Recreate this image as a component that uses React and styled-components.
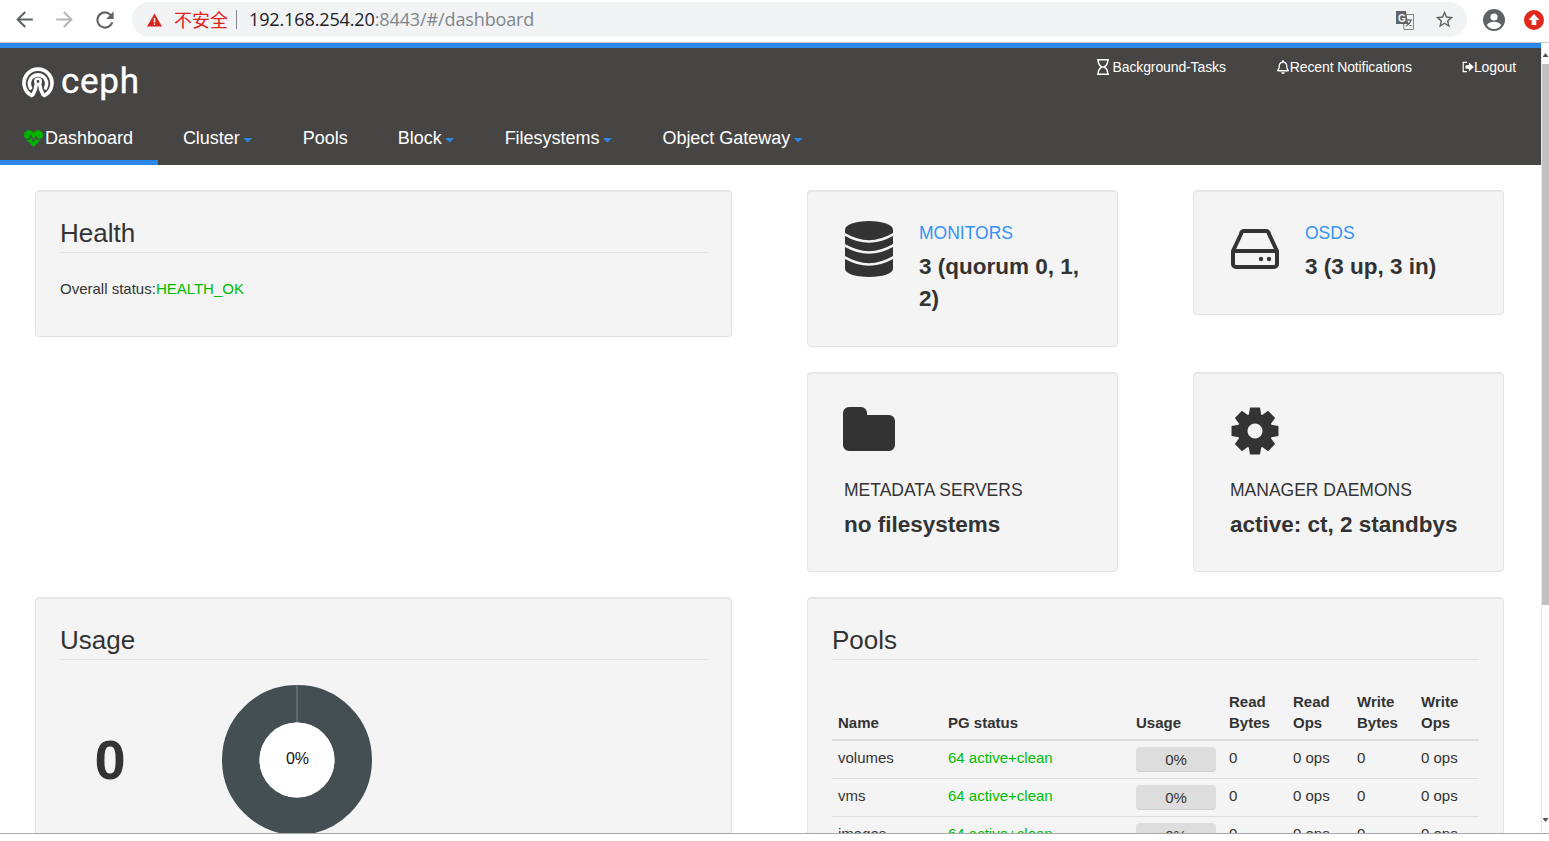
import React from "react";
import styled, { createGlobalStyle } from "styled-components";
import { FaHeartbeat, FaRegBell, FaRegHourglass } from "react-icons/fa";

const Global = createGlobalStyle`
  html, body { margin: 0; padding: 0; height: 100%; overflow: hidden; background: #fff; }
  #root { height: 100%; }
  * { box-sizing: border-box; }
`;

const Shell = styled.div`
  height: 841px;
  display: flex;
  flex-direction: column;
  font-family: "Liberation Sans", Arial, sans-serif;
  color: #333;
  overflow: hidden;
`;
const Toolbar = styled.div`
  flex: 0 0 43px;
  display: flex;
  padding: 2px 0 5px 4px;
  border-bottom: 1px solid #ccc;
  background: #fff;
  overflow: hidden;
`;
const ToolButton = styled.div`
  flex: 0 0 40px;
  height: 35px;
  display: flex;
  align-items: center;
  justify-content: center;
  margin-left: ${(p) => p.$left || 0}px;
  color: #5f6368;
`;
const Omnibox = styled.div`
  flex: 0 0 1335px;
  height: 35px;
  margin: 0 7px;
  padding: 0 3px 0 15px;
  display: flex;
  align-items: center;
  background: #f1f3f4;
  border-radius: 18px;
`;
const Insecure = styled.span`
  margin: 0 0 2px 12px;
  font: 18px "Noto Sans CJK SC", sans-serif;
  color: #e0211b;
`;
const Divider = styled.span`
  width: 1px;
  height: 19px;
  margin: 0 12px 0 8px;
  background: #80868b;
`;
const Url = styled.span`
  flex: 1;
  margin-bottom: 2px;
  font: 18px "Open Sans", sans-serif;
  letter-spacing: -0.12px;
  color: #80868b;
  white-space: nowrap;
`;
const UrlHost = styled.span`
  color: #202124;
`;
const OmniIcon = styled.div`
  flex: 0 0 40px;
  display: flex;
  justify-content: center;
`;

const Viewport = styled.div`
  flex: 1;
  min-height: 0;
  display: flex;
`;
const Page = styled.div`
  flex: 1;
  min-width: 0;
  overflow: hidden;
`;
const Scrollbar = styled.div`
  flex: 0 0 8px;
  display: flex;
  flex-direction: column;
  align-items: center;
  background: #fff;
  border-left: 1px solid #e8e8e8;
`;
const ScrollArrow = styled.div`
  flex: 0 0 4px;
  width: 6px;
  margin: ${(p) => (p.$down ? "auto 0 11px" : "10px 0 7px")};
  background: #505050;
  clip-path: ${(p) =>
    p.$down
      ? "polygon(0 0, 100% 0, 50% 100%)"
      : "polygon(50% 0, 100% 100%, 0 100%)"};
`;
const ScrollThumb = styled.div`
  flex: 0 0 541px;
  width: 100%;
  background: #c1c1c1;
`;
const BottomEdge = styled.div`
  flex: 0 0 8px;
  border-top: 1px solid #a9a9a9;
  background: #fff;
`;

const Header = styled.header`
  height: 122px;
  background: #474544;
  border-top: 5px solid #2b88e8;
  display: flex;
  flex-direction: column;
`;
const TopRow = styled.div`
  height: 67px;
  display: flex;
  justify-content: space-between;
  padding: 0 25px 0 22px;
`;
const Brand = styled.div`
  display: flex;
  align-items: center;
  gap: 7px;
  height: 67px;
  color: #fff;
`;
const BrandName = styled.span`
  font: 400 35px "Roboto", sans-serif;
  -webkit-text-stroke: 0.4px #fff;
  letter-spacing: 0.7px;
  line-height: 1;
`;
const TopLinks = styled.div`
  display: flex;
  gap: 50px;
  height: 38px;
  align-items: center;
`;
const TopLink = styled.a`
  display: flex;
  align-items: center;
  gap: ${(p) => p.$gap || 0}px;
  font-size: 14px;
  letter-spacing: -0.12px;
  color: #fff;
`;
const Nav = styled.nav`
  height: 50px;
  display: flex;
`;
const NavItem = styled.a`
  height: 50px;
  padding: 2px 25px 0 ${(p) => (p.$active ? 24 : 25)}px;
  display: flex;
  align-items: center;
  font-size: 18px;
  letter-spacing: -0.02px;
  color: #fff;
  border-bottom: 5px solid ${(p) => (p.$active ? "#2b88e8" : "transparent")};
`;
const NavIcon = styled.span`
  display: flex;
  margin-right: 2px;
  color: #00b300;
`;
const Caret = styled.span`
  width: 10px;
  height: 5px;
  margin: 3px 0 0 3px;
  background: #2b88e8;
  clip-path: polygon(0 0, 100% 0, 50% 100%);
`;

const Content = styled.main`
  display: grid;
  grid-template-columns: 697px 697px;
  column-gap: 75px;
  row-gap: 25px;
  padding: 25px 37px 0 35px;
  align-items: start;
`;
const Panel = styled.section`
  background: #f4f4f4;
  border: 1px solid #e3e3e3;
  border-radius: 4px;
  box-shadow: inset 0 1px 1px rgba(0, 0, 0, 0.05);
  padding: 24px;
  min-height: ${(p) => p.$minHeight || 0}px;
`;
const PanelTitle = styled.h2`
  margin: 0;
  height: 38px;
  font-size: 26px;
  font-weight: 400;
  line-height: 36px;
  border-bottom: 1px solid #e2e2e2;
  color: #333;
`;
const StatusLine = styled.p`
  margin: 26px 0 0;
  font-size: 15px;
  line-height: 20px;
`;
const Good = styled.span`
  color: #00bb00;
`;
const InfoGrid = styled.div`
  display: grid;
  grid-template-columns: 311px 311px;
  column-gap: 75px;
  row-gap: 25px;
  align-items: start;
`;
const InfoCard = styled(Panel)`
  display: ${(p) => (p.$stacked ? "block" : "grid")};
  grid-template-columns: 75px 1fr;
  padding: 30px 24px 30px 36px;
  min-height: ${(p) => p.$h}px;
`;
const IconWrap = styled.div`
  height: 56px;
  color: #333;
  display: flex;
  align-items: center;
  margin-left: ${(p) => p.$left || 0}px;
`;
const StackedIcon = styled.div`
  height: 75px;
  padding-top: 4px;
  margin-left: ${(p) => p.$left || 0}px;
  display: flex;
  align-items: flex-start;
`;
const InfoLabel = styled.div`
  font-size: 17.5px;
  line-height: 24px;
  color: ${(p) => (p.$link ? "#3393f5" : "#333")};
`;
const InfoValue = styled.div`
  margin-top: ${(p) => (p.$stacked ? 7 : 6)}px;
  font-size: 22.5px;
  font-weight: 700;
  line-height: 32px;
  color: #333;
`;
const UsageBody = styled.div`
  display: grid;
  grid-template-columns: 100px 150px;
  column-gap: 62px;
  align-items: center;
  margin-top: 25px;
  height: 260px;
  align-content: start;
`;
const BigNumber = styled.div`
  font-size: 56px;
  font-weight: 700;
  line-height: 150px;
  height: 150px;
  text-align: center;
  color: #333;
`;
const Donut = styled.div`
  position: relative;
  width: 150px;
  height: 150px;
`;
const DonutLabel = styled.div`
  position: absolute;
  inset: 0;
  display: flex;
  align-items: center;
  justify-content: center;
  font-size: 16px;
  color: #111;
  padding: 0 0 2px 1px;
`;
const Table = styled.table`
  width: 647px;
  margin-top: 25px;
  border-collapse: collapse;
  table-layout: fixed;
  font-size: 15px;
`;
const Th = styled.th`
  width: ${(p) => p.$w}px;
  padding: 6px;
  text-align: left;
  vertical-align: bottom;
  font-weight: 700;
  line-height: 21px;
  border-bottom: 2px solid #ddd;
`;
const Td = styled.td`
  height: 38px;
  padding: 0 6px 3px;
  line-height: 21px;
  border-bottom: 1px solid #ddd;
  color: ${(p) => (p.$good ? "#00bb00" : "#333")};
  vertical-align: middle;
`;
const Bar = styled.div`
  width: 80px;
  height: 25px;
  margin-top: 3px;
  background: #ddd;
  border-radius: 4px;
  box-shadow: inset 0 -1px 0 rgba(0, 0, 0, 0.06);
  text-align: center;
  line-height: 26px;
  color: #333;
`;

const Back = () => (
  <svg width="25" height="25" viewBox="0 0 24 24"><path fill="currentColor" d="M20 11H7.830l5.590-5.590L12 4l-8 8 8 8 1.410-1.410L7.830 13H20z" /></svg>
);
const Forward = () => (
  <svg width="25" height="25" viewBox="0 0 24 24"><path fill="#b4b7ba" d="M4 11h12.170l-5.590-5.590L12 4l8 8-8 8-1.410-1.410L16.170 13H4z" /></svg>
);
const Reload = () => (
  <svg width="26" height="26" viewBox="0 0 24 24"><path fill="currentColor" d="M17.650 6.350A7.960 7.960 0 0 0 12 4a8 8 0 1 0 7.730 10h-2.080A6 6 0 1 1 12 6c1.660 0 3.140.690 4.220 1.780L13 11h7V4z" /></svg>
);
const Warning = () => (
  <svg width="15" height="14" viewBox="0 0 15 14"><path fill="#d9251d" d="M7.500.5 15 13.600H0z" /><path fill="#fff" d="M6.800 5h1.400v4.600H6.800zM6.800 10.400h1.400v1.500H6.800z" /></svg>
);
const Translate = () => (
  <svg width="19" height="20" viewBox="0 0 19 20">
    <path fill="none" stroke="#80868b" d="M8 4.500h10.500v15H9z" />
    <path fill="#5f6368" d="M1 1h10l2 13H1z" />
    <text x="3" y="11.500" fontSize="10" fontWeight="700" fontFamily="Liberation Sans" fill="#f1f3f4">G</text>
    <path fill="none" stroke="#5f6368" strokeWidth="1.200" d="M11 10h6M14 9v1.500M16 10.500c-1 3-3 4.500-5 5.500M12 12c1 1.600 2.500 3 4.500 4" />
  </svg>
);
const Star = () => (
  <svg width="21" height="21" viewBox="0 0 24 24"><path fill="#5f6368" d="M22 9.240l-7.190-.620L12 2 9.190 8.630 2 9.240l5.460 4.730L5.820 21 12 17.270 18.180 21l-1.630-7.030zM12 15.400l-3.760 2.270 1-4.280-3.320-2.880 4.380-.380L12 6.100l1.710 4.040 4.380.380-3.320 2.880 1 4.280z" /></svg>
);
const Avatar = () => (
  <svg width="22" height="22" viewBox="0 0 22 22">
    <circle cx="11" cy="11" r="11" fill="#5f6368" />
    <circle cx="11" cy="8" r="3.600" fill="#fff" />
    <path fill="#fff" d="M3.800 16c1.500-2.400 4.500-3.300 7.200-3.300s5.700.9 7.200 3.300A9 9 0 0 1 11 20a9 9 0 0 1-7.200-4z" />
  </svg>
);
const UpdateBadge = () => (
  <svg width="20" height="20" viewBox="0 0 20 20">
    <circle cx="10" cy="10" r="10" fill="#e0281c" />
    <path fill="#fff" d="M10 4l5.500 6H12.300v5H7.700v-5H4.500z" />
  </svg>
);
const CephMark = () => (
  <svg width="32" height="32" viewBox="0 0 32 32" fill="none" stroke="#fff" strokeWidth="3.600" strokeLinecap="round">
    <path d="M9.500 29.500A14 14 0 1 1 22.500 29.500" />
    <path d="M8.500 22A8.700 8.700 0 1 1 23.500 22" />
    <circle cx="16" cy="15.500" r="2.700" strokeWidth="2.600" />
    <path d="M14 19.500c0 3.500-1.500 6.500-3 9M18 19.500c0 3.500 1.500 6.500 3 9" />
  </svg>
);
const LogoutIcon = () => (
  <svg width="12" height="12" viewBox="0 0 13 12">
    <path fill="none" stroke="#fff" strokeWidth="1.300" d="M5.500 1H1.300v10h4.200" />
    <path fill="#fff" d="M3.800 4h3.700V1.200L12.800 6l-5.300 4.800V8H3.800z" />
  </svg>
);
const DatabaseIcon = () => (
  <svg width="48" height="56" viewBox="0 0 48 56">
    <path fill="#333" d="M0 8.500C0 3.800 10.700 0 24 0s24 3.800 24 8.500V48c0 4.400-10.700 8-24 8S0 52.400 0 48z" />
    <path fill="none" stroke="#f4f4f4" strokeWidth="2.600" d="M-1 13Q24 28 49 13M-1 24Q24 39 49 24M-1 36Q24 51 49 36" />
  </svg>
);
const HddIcon = () => (
  <svg width="48" height="40" viewBox="0 0 48 40" fill="none" stroke="#333" strokeWidth="4" strokeLinejoin="round">
    <path d="M2 22 10 5a3 3 0 0 1 3-3h22a3 3 0 0 1 3 3l8 17v13a3 3 0 0 1-3 3H5a3 3 0 0 1-3-3z" />
    <path d="M2 22h44" />
    <circle cx="30" cy="30" r="2.200" fill="#333" stroke="none" />
    <circle cx="38" cy="30" r="2.200" fill="#333" stroke="none" />
  </svg>
);
const FolderIcon = () => (
  <svg width="52" height="44" viewBox="0 0 52 44">
    <path fill="#333" d="M6 0h12a6 6 0 0 1 6 6v2h22a6 6 0 0 1 6 6v24a6 6 0 0 1-6 6H6a6 6 0 0 1-6-6V6a6 6 0 0 1 6-6z" />
  </svg>
);
const gearPath = (() => {
  const pts = [];
  const teeth = 8;
  for (let i = 0; i < teeth; i++) {
    const a = (i * Math.PI * 2) / teeth - Math.PI / 2;
    [[17.5, -0.36], [24, -0.21], [24, 0.21], [17.5, 0.36]].forEach(([r, d]) => {
      pts.push(`${(24 + r * Math.cos(a + d)).toFixed(2)} ${(24 + r * Math.sin(a + d)).toFixed(2)}`);
    });
  }
  return `M${pts.join("L")}Z M24 16.500a7.500 7.500 0 1 0 .01 0Z`;
})();
const GearIcon = () => (
  <svg width="48" height="48" viewBox="0 0 48 48"><path fill="#333" fillRule="evenodd" d={gearPath} /></svg>
);
const UsageDonut = () => (
  <svg width="150" height="150" viewBox="0 0 150 150">
    <circle cx="75" cy="75" r="56.250" fill="none" stroke="#434f52" strokeWidth="37.500" />
    <path d="M75 0v37.500" stroke="#7f9a8c" strokeWidth="0.800" />
    <circle cx="75" cy="75" r="37.500" fill="#fff" />
  </svg>
);

const pools = ["volumes", "vms", "images", "backups"];
const headers = [
  ["Name", 110], ["PG status", 188], ["Usage", 93], ["Read Bytes", 64],
  ["Read Ops", 64], ["Write Bytes", 64], ["Write Ops", 64],
];

export default function App() {
  return (
    <Shell>
      <Global />
      <Toolbar>
        <ToolButton><Back /></ToolButton>
        <ToolButton><Forward /></ToolButton>
        <ToolButton $left={1}><Reload /></ToolButton>
        <Omnibox>
          <Warning />
          <Insecure>不安全</Insecure>
          <Divider />
          <Url><UrlHost>192.168.254.20</UrlHost>:8443/#/dashboard</Url>
          <OmniIcon><Translate /></OmniIcon>
          <OmniIcon><Star /></OmniIcon>
        </Omnibox>
        <ToolButton><Avatar /></ToolButton>
        <ToolButton><UpdateBadge /></ToolButton>
      </Toolbar>
      <Viewport>
        <Page>
          <Header>
            <TopRow>
              <Brand>
                <CephMark />
                <BrandName>ceph</BrandName>
              </Brand>
              <TopLinks>
                <TopLink $gap={2}><FaRegHourglass size={16} />Background-Tasks</TopLink>
                <TopLink><FaRegBell size={14} />Recent Notifications</TopLink>
                <TopLink><LogoutIcon />Logout</TopLink>
              </TopLinks>
            </TopRow>
            <Nav>
              <NavItem $active><NavIcon><FaHeartbeat size={19} /></NavIcon>Dashboard</NavItem>
              <NavItem>Cluster<Caret /></NavItem>
              <NavItem>Pools</NavItem>
              <NavItem>Block<Caret /></NavItem>
              <NavItem>Filesystems<Caret /></NavItem>
              <NavItem>Object Gateway<Caret /></NavItem>
            </Nav>
          </Header>
          <Content>
            <Panel $minHeight={147}>
              <PanelTitle>Health</PanelTitle>
              <StatusLine>Overall status:<Good>HEALTH_OK</Good></StatusLine>
            </Panel>
            <InfoGrid>
              <InfoCard $h={157}>
                <IconWrap $left={1}><DatabaseIcon /></IconWrap>
                <div>
                  <InfoLabel $link>MONITORS</InfoLabel>
                  <InfoValue>3 (quorum 0, 1, 2)</InfoValue>
                </div>
              </InfoCard>
              <InfoCard $h={125}>
                <IconWrap $left={1}><HddIcon /></IconWrap>
                <div>
                  <InfoLabel $link>OSDS</InfoLabel>
                  <InfoValue>3 (3 up, 3 in)</InfoValue>
                </div>
              </InfoCard>
              <InfoCard $h={200} $stacked>
                <StackedIcon $left={-1}><FolderIcon /></StackedIcon>
                <InfoLabel>METADATA SERVERS</InfoLabel>
                <InfoValue $stacked>no filesystems</InfoValue>
              </InfoCard>
              <InfoCard $h={200} $stacked>
                <StackedIcon $left={1}><GearIcon /></StackedIcon>
                <InfoLabel>MANAGER DAEMONS</InfoLabel>
                <InfoValue $stacked>active: ct, 2 standbys</InfoValue>
              </InfoCard>
            </InfoGrid>
            <Panel>
              <PanelTitle>Usage</PanelTitle>
              <UsageBody>
                <BigNumber>0</BigNumber>
                <Donut>
                  <UsageDonut />
                  <DonutLabel>0%</DonutLabel>
                </Donut>
              </UsageBody>
            </Panel>
            <Panel>
              <PanelTitle>Pools</PanelTitle>
              <Table>
                <thead>
                  <tr>{headers.map(([h, w]) => <Th key={h} $w={w}>{h}</Th>)}</tr>
                </thead>
                <tbody>
                  {pools.map((name) => (
                    <tr key={name}>
                      <Td>{name}</Td>
                      <Td $good>64 active+clean</Td>
                      <Td><Bar>0%</Bar></Td>
                      <Td>0</Td>
                      <Td>0 ops</Td>
                      <Td>0</Td>
                      <Td>0 ops</Td>
                    </tr>
                  ))}
                </tbody>
              </Table>
            </Panel>
          </Content>
        </Page>
        <Scrollbar>
          <ScrollArrow />
          <ScrollThumb />
          <ScrollArrow $down />
        </Scrollbar>
      </Viewport>
      <BottomEdge />
    </Shell>
  );
}
